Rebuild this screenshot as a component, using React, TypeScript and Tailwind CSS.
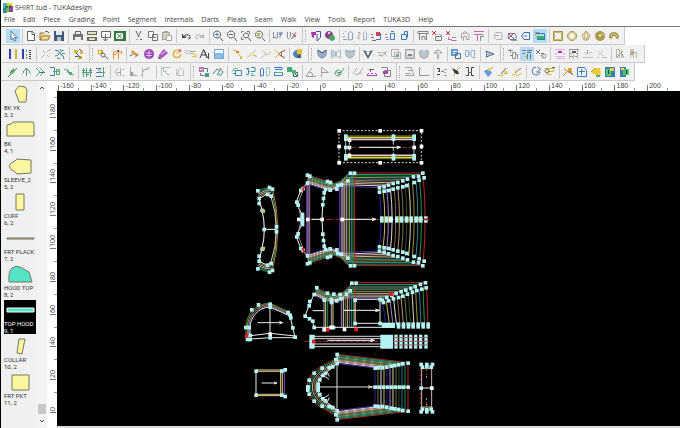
import React from 'react';

type Pt = [number, number];
// each part is "color|path" for a stroke, "color!|path" for a filled shape
type Item = { name: string; parts: string[]; active?: boolean } | number | 'grip' | 'gripNarrow';

const t = (name: string, ...parts: string[]): Item => ({ name, parts });
const on = (name: string, ...parts: string[]): Item => ({ name, parts, active: true });

const menus = ['File', 'Edit', 'Piece', 'Grading', 'Point', 'Segment', 'Internals', 'Darts', 'Pleats', 'Seam', 'Walk', 'View', 'Tools', 'Report', 'TUKA3D', 'Help'];

const fileBar: Item[] = [
  on('Select', '#fff!|M4 1v9l2-2 1.500 3 1.500-1-1.500-2.500H10z', '#5c7080|M4 1v9l2-2 1.500 3 1.500-1-1.500-2.500H10z'),
  4,
  t('New', '#fff!|M2.500 1.500h5l2 2v7h-7z', '#555|M2.500 1.500h5l2 2v7h-7zM7 1.500v3h3'),
  t('Open', '#f6dc90!|M1 3h4l1 1h4v6H1z', '#8a6a20|M1 10V3h4M1 10l2-4h8l-2 4z', '#444|M6 2q2-2 4 1'),
  t('Save', '#2f4a66!|M1 1h9l1 1v9H1z', '#dce8f0!|M3 1h6v4H3z', '#b0c0d0!|M4 7h4v4H4z'),
  5,
  t('Print', '#666!|M1 4h10v6H1z', '#eee!|M4 1h5v3H4z', '#555|M3.500 4V1.500h5V4', '#eee!|M3 7h6v3H3z'),
  t('Plot', '#555!|M1 1h10v4H1z', '#e5e0b0!|M2 2h8v2H2z', '#555!|M1 7h10v4H1z', '#e5e0b0!|M3 8h6v2H3z'),
  t('Digitize', '#fff!|M1 2h10v6H1z', '#555|M1.500 1.500h9v6h-9zM5.500 4v7M3.500 9l2 2 2-2'),
  t('Export to Excel', '#1d6b2c!|M0 1h12v10H0z', '#fff!|M2 3h7v6H2z', '#1d6b2c|M3 3.500l5 5M8 3.500l-5 5'),
  5,
  t('Cut', '#555|M3 1l3 6M8 1L5 7M3.500 9.500h1M7 9.500h2'),
  t('Copy', '#fff!|M2 1h5v7H2z', '#666|M1.500 1.500h5v6h-5zM5.500 4.500h5v6h-5zM7 7.500h2'),
  t('Paste', '#d8cdb4!|M1 2h8v8H1z', '#999|M1.500 2.500h7v7h-7zM3 1.500h4', '#fff!|M5 5h6v6H5z', '#999|M5.500 5.500h5v5h-5z'),
  5,
  t('Undo', '#333|M2.500 4v3h4M3 7q4-4 7-1q1 3-2 3', '#333!|M2 4l4 4H2z'),
  t('Redo', '#aaa|M9.500 4v3h-4M9 7Q5 3 2 6q-1 3 2 3', '#aaa!|M10 4v4H6z'),
  4,
  t('Zoom In', '#fff!|M5 1a3.500 3.500 0 1 0 .1 0', '#444|M5 1a3.500 3.500 0 1 0 .1 0M8 7.500l3 3.500', '#2a7ac0|M3 4.500h4M5 2.500v4'),
  t('Zoom Out', '#fff!|M5 1a3.500 3.500 0 1 0 .1 0', '#444|M5 1a3.500 3.500 0 1 0 .1 0M8 7.500l3 3.500M3 4.500h4'),
  t('Zoom Window', '#666|M1.500 3V1.500h2M7 1.500h2.500V4M1.500 7v2.500h2', '#444|M6 3a2.500 2.500 0 1 0 .1 0M8 7.500l3 3.500'),
  t('Zoom Piece', '#555|M5 1a3.500 3.500 0 1 0 .1 0M8 7.500l3 3.500', '#b9a840!|M3 3h3v3H3z'),
  4,
  t('What Is', '#789|M1.500 2v6l2-1 1 2M5.500 2v6M7 3q4-2 3 1l-2 2v2', '#5a90c8!|M7 3h3v2H7z'),
  t('Clear Marks', '#789|M1.500 2v6l2 1M4.500 2v5', '#b45c48|M6 8l4-6M6 3l4 4', '#46809c|M5 9l5-4'),
  'grip',
  t('Pleated Piece', '#a020a0!|M1 2h5v3H4v3L2 7z', '#2840b0|M6 1.500h4.500v6L7 11V4'),
  t('Grade Globe', '#803080!|M5 1a4 4 0 1 0 .1 0', '#38a058!|M8 5a3 3 0 1 0 .1 0', '#ddd!|M4 2h2v2H4z'),
  4,
  t('Grade Up', '#99a|M1 3.500h1M3 1.500h1M1 6.500h2M1 9.500h4', '#7898c8|M6.500 10V3q2-3 4 0v6.500z'),
  t('Grade Rotate', '#b890a0|M2 2.500q3-1 2 2q-3 1-2 4h2', '#98acd0|M7.500 10V3q2-3 3 0v6.500z'),
  t('Grade Remove', '#567|M1 4.500h2M1 7.500h3M2 10.500h4', '#c83040!|M6 2h4v4H6z', '#3060c0|M6 9.500h4.500V3'),
  t('Grade Apply', '#889|M1 4.500h2M1 7.500h3M2 9.500h3', '#2870c8|M6.500 3.500h4v6h-4zM7 1.500h3'),
  t('Grade Copy', '#2870b0|M3.500 9.500v-5h5v5zM6.500 4.500v-3h3v6'),
  5,
  t('Measure', '#777|M1 1.500h10v2H1zM2.500 10V4M9.500 4v6M5 10V6.500h3V10'),
  t('Delete Measure', '#d02020|M1 1l4 4M5 1L1 5', '#777|M4.500 6.500h6v4h-6zM8 4l3 2'),
  t('Delete Rule', '#d02020|M1 1l4 4M5 1L1 5', '#c050c0|M3.500 7v2.500h3v1h5', '#60a060|M7 7.500h4'),
  t('Stack', '#999|M2 4.500l4-3 4 3v5H7.500V6.500h-3v4M2.500 4v5', '#d090a0|M4 3.500h3'),
  t('Corner Rule', '#d050b0|M1 1.500h10M1 4.500h9M4.500 4v7', '#50a068|M7 6.500h4M7.500 6v5'),
  5,
  t('Trace', '#aaa|M4 2.500h5q1 0 1 2v5H4.500L2.500 7.500v-3zM2 5.500h5'),
  t('Trace Delete', '#4878a8|M3 3.500h6l1 2v4H4L2 7z', '#d03040|M2 3l6 6M8 3L2 9', '#60b070|M5 10.500h6'),
  t('Trace Open', '#2060b0|M4 2.500h5.500v7H4L1.500 6zM4 6h3'),
  on('Trace Fill', '#c04040|M1 2l4 2', '#347040|M1 5l4-3', '#30b060!|M3 6h8v4H3z', '#2870b0|M4 3.500h6.500v6H4.500L3 7'),
  4,
  t('Rectangle', '#9f8c32|M1.500 1.500h9v9h-9z', '#c7b450|M2.500 2.500h7v7h-7z'),
  t('Circle', '#9f8c32|M6 1.500a4.500 4.500 0 1 0 .1 0', '#c7b450|M6 2.500a3.500 3.500 0 1 0 .1 0'),
  t('Polygon', '#b29f42|M6 1l4 4-2 5H4L2 5zM6 2.500l2 2.500-1 4H5L4 5z'),
  t('Disc', '#a3903a!|M6 1a5 5 0 1 0 .1 0', '#e8dca0!|M6 4a1.500 1.500 0 1 0 .1 0', '#dacb88|M8 3l2 3'),
  t('Half Disc', '#9f8c32!|M1 8q0-6 5-6t5 6l-3 1q0-3-2-3t-2 3z', '#d8cb8a|M3 7q0-3 3-3t3 3'),
];

const pieceBar: Item[] = [
  t('Mirror Lines', '#2030a8!|M2 1h2v10H2z', '#c8b030!|M8 1h2v10H8z'),
  t('Mirror Points', '#2030a8!|M1 1h2v10H1z', '#30a050|M5.500 2v2M5.500 6v2M5.500 9v2', '#333|M8 2.500h2M8 4.500h2M8 6.500h2M8 8.500h2M8 10.500h2'),
  5,
  t('Break Line', '#aaa|M1 10l4-4M7 4l4-3M3 3l2 2M7 7l2 2'),
  t('Walk Curve', '#347090|M1 2.500h2q3 0 2 3T1 8M6 1q3 2 0 5 4 1 4 5', '#38a050|M8 2.500h2M8 5.500h3M3 10.500h3'),
  5,
  t('Seam Curve', '#d8a820!|M1 2h4v3H1zM5 8h4v3H5z', '#284880|M6 1l3 2-1 3M2 8.500h3M3 5l5 5', '#e0b030!|M7 3h3v3H7z'),
  'grip',
  t('Notch Tool', '#d8a018!|M1 2h5v4H1z', '#555|M6 5a2 2 0 1 0 .1 0M8 8l3 3', '#fff!|M2 3h2v2H2z'),
  t('Path Tool', '#e88820|M2.500 11V4q3-2 3 2l-3 1M7.500 11V3.500h3V6', '#b02020!|M6 2h2v2H6z'),
  4,
  t('Draft', '#d89018!|M3 2l7 5-3 1-5-4z', '#555|M1 8l3-2', '#2870c0|M6 9.500l3-3'),
  t('Button', '#9030b0!|M6 1a5 5 0 1 0 .1 0', '#e0b8ec|M6 2v8M2.500 5h7M3 7.500h6'),
  t('Pencil', '#a040c0!|M7 1l4 4-6 5-4 1 1-4z', '#ddd|M4 7l5-4', '#666|M1 10l3 1'),
  t('Rotate', '#e0a818|M6 2a4 4 0 1 0 4 4M6 2.500a3.500 3.500 0 1 0 3.500 3.500', '#e05030!|M7 1l4 1-3 3z', '#e0a818|M5 6l4-3'),
  t('Copy Object', '#bbb|M1.500 2.500h4v3h-4zM5 5.500h4', '#d8c030|M7 8.500h4M8 6.500h3v3', '#90a060|M6 3.500h4'),
  t('Text', '#333|M1 10L4.500 1.500 8 10M2.500 7h4M9.500 5v6', '#333|M5 2l3.500 8'),
  t('Picture', '#84bce8!|M1 1h10v10H1z', '#fff!|M1 2h10v3H1z', '#6aa0d0|M1.500 1.500h9v9h-9zM2 8l3-3 5 5'),
  5,
  t('Dart Add', '#d8b020|M1 2.500h4M4 3l5 6', '#e07820!|M4 3h3v2H4z', '#d8c030!|M8 8h2v3H8z'),
  t('Dart Line', '#bbb|M1 10l9-8', '#cac048|M2 9l4-4M7 7.500h3v2'),
  t('Dart Fold', '#bbb|M2 2l5 5 4-3M1 10l5-4', '#c8b830|M4 4l3 3'),
  t('Dart Close', '#d03020|M4 6l7-4M4 6l7 4', '#d8b020|M1 2l4 4-4 4', '#508050|M7.500 3v6'),
  4,
  t('Render', '#4078c0!|M5 2a4 4 0 1 0 .1 0', '#e8b820!|M5 1h5v5H5z', '#285848!|M5 7h4v3H5z'),
  'grip',
  t('Vest', '#93a9c8!|M1 2h2l3 2 3-2h2l-1 6-4 3-4-3z', '#345|M2 2l4 3 4-3', '#7088a0|M1.500 2l1 6 3.500 2 3.500-2 1-6'),
  t('Vest Split', '#9eb2c6|M1.500 2v8l4-2V4zM10.500 2v8l-4-2V4z', '#bcccda!|M2 4h3v4H2z'),
  t('Vest Shade', '#b8c4cc!|M1 2h10l-1 6-4 3-4-3z', '#92a5b3|M1.500 2l1 6L6 10l3.500-2 1-6-3 2h-3z'),
  4,
  t('Dart Down', '#345066!|M1 2l5 2 5-2-5 9z', '#e8f0f4!|M4 4h4l-2 4z'),
  t('Dart Split', '#aaa|M1 4.500h3l2 4 5-6M6 4.500h3.500v3M2 7.500h3'),
  t('Piece Grid', '#aaa|M1.500 1.500h7v7h-7zM4.500 4.500h6v6h-6z', '#79909c!|M6 6h3v3H6z'),
  t('Piece Image', '#ccc!|M1 1h10v10H1z', '#999|M1.500 1.500h9v9h-9z', '#eef!|M3 3h6v3H3z', '#777!|M4 6h4v2H4z'),
  t('Piece Shade', '#b8c2cc!|M1 3l3-2 2 2 3-2 2 2-1 6-4 2-4-2z', '#92a5b3|M1.500 3l1 6L6 10.500 9.500 9l1-6'),
  t('Piece Drop', '#a5a9ad!|M1 5l5-4 5 4-4 1v5H5V6z', '#d8dfe5!|M5 3h3v3H5z'),
  4,
  t('Layer', '#5890c8!|M1 1h7v7H1z', '#fff|M3 3.500h4M3 5.500h4', '#36608c|M5.500 5.500h5v5h-5z'),
  t('Layer Pair', '#88a8c4|M1.500 2.500h3v6h-3zM7.500 2.500h3v8l-3-2z', '#b8cce0!|M5 3h3v5H5z'),
  6,
  t('Play', '#3a5878|M2 3l8 3-8 3 1-3z', '#98b0c8!|M3 5h4v2H3z'),
  'gripNarrow',
  t('Plan A', '#888|M1 2.500h5M3.500 1v4M5.500 4.500h3v6h-3zM8 6.500h2.500V11', '#5a9468|M3 7.500h3'),
  on('Plan B', '#a06090|M1 2.500h4M1 5.500h3', '#447060|M6 2.500h5M6 4.500h4M6.500 6v5M9.500 6v5', '#c89030|M4 8.500h3'),
  t('Plan C', '#666|M1 2l4 4M1 6l4-4M6 5.500h3M6 7l3 3', '#888|M9 6a2 2 0 1 0 .1 0'),
  5,
  t('Mark A', '#e8a8e4|M1 1.500h10M1 8.500h10M2 10.500h9', '#b02090!|M4 3h4v2H4z', '#df9bdc|M1 5.500h2M9 5.500h2'),
  t('Mark B', '#888|M1 1.500h10M2 5.500h2M8 5.500h2M2 8.500h3M7 8.500h3', '#445!|M4 3h4v2H4z', '#aaa|M1.500 2v9M5.500 6v5M9.500 2v9'),
  t('Mark C', '#bbb|M2 4l3 3M7 4.500h3M1 9.500h10', '#999|M5.500 2v4'),
  t('Mark D', '#bbb|M2 3l5 5M7 3L3 7M6 9.500h5M1 9.500h2'),
  4,
  t('Block A', '#b5ae98|M2.500 1.500h3v8h-3zM7.500 2v8', '#87938b|M3 9l6-6M8 6l2 4'),
  t('Block B', '#b5ae98|M2.500 10V1.500h3V10M5.500 4.500h3V10', '#979d90!|M3 3h2v4H3z'),
];

const gradeBar: Item[] = [
  t('Add Point', '#555|M1 11L10 2', '#49b960!|M4 4l4-1v3L5 8H3z', '#247038|M3 7l4-4'),
  t('Move Point', '#3a9850|M5.500 10V2M2 6l3.500-4L9 6', '#74889a|M1 8l2-2M8 6l2 2'),
  t('Align Point', '#48a868|M1 2l4 4-4 4M5 2l4 4-4 4', '#336677|M4 6.500h6'),
  t('Merge Point', '#3570a0|M1 1.500h4.500v8H1', '#40a060|M4 5.500h7M7.500 3.500v5h3v-5z'),
  t('Slide Point', '#48a868|M1 3l3 1 3 3 4 2', '#2d7080|M5 3.500v3h4', '#48a868!|M6 6h3v3H6z'),
  4,
  t('Spread', '#3c9c58|M2.500 2v9M5.500 2v9M9.500 2v9M1 6.500h10', '#3d7898|M1 4.500h3M5 8.500h3M8 4.500h3'),
  t('Collapse', '#3870a8|M1 2.500h5l-2 2 2 2H1M1 10.500h6', '#42a45c|M8.500 1v10M6 6.500h4'),
  4,
  t('Shift Left', '#aaa|M5 2L2 6l3 4M7.500 2v8M9 3.500h2M9 9.500h2', '#76b48a|M4 6.500h4'),
  t('Angle', '#aaa|M3.500 1v8.500h7M4 6l4 3', '#999!|M3 6h3v4H3z'),
  t('Curve Corner', '#aaa|M1 10Q1 2 9 1.500M1.500 11V2', '#a3c4ab|M4 3.500h4'),
  5,
  t('Bounds', '#bbb|M1.500 10V1.500h9M4 5l5 4', '#96c8a5|M3.500 2v3.500h3M7 8.500h3'),
  t('Round Notch', '#bbb|M2.500 3v6.500h7V5Q6-1 4.500 4v5', '#93c2a1|M2 7.500h3'),
  'grip',
  t('Mapping', '#bd60b0!|M1 1h5v5H1z', '#fff|M2 3.500h3', '#367a5a|M6 2.500h3.500V6M2.500 7v2.500h4', '#448888!|M7 7h4v4H7z'),
  t('Link', '#367a98|M1 8l4-5 3 2-3 4M6 9h3l2-3-3-3', '#bfa434|M7 2.500h3'),
  5,
  t('Rotate Grade', '#2880b0|M4.500 4.500h6v5h-6zM2 7.500h2', '#40b060|M1 5l3-3 3 1M2 3l2 2'),
  t('Flip Grade', '#2880b0|M1 2.500h2.500v6H1M6 1.500h4v4H6', '#48a888|M8 7l-2 2.500h4M2 3l3 3'),
  t('Mirror Grade', '#2870c8|M1.500 10V3q2-2 3 0v6.500z', '#90c8a8|M7.500 10V1.500h3v8z'),
  t('Equal Grade', '#2870c8|M1 1.500h8v2H2M1.500 9.500v-3h8v3z', '#45a579|M3 6.500h6'),
  t('Nest', '#30a868!|M0 1h5v5H0z', '#335566|M4 3l6 7M6.500 6.500h4v4h-4z', '#3cb371!|M5 4h4v4H5z'),
  4,
  t('Protractor', '#999|M1 10L7 2M1 10.500h10M4 6q4 0 4 4'),
  t('Triangle', '#999|M2.500 11V1.500l7 5H3'),
  t('Compass', '#48a058|M5 4a3 3 0 1 0 .1 0M3 5l3 4 5-7', '#3878a0|M5 6.500h3'),
  5,
  t('Parallel', '#aaa|M1 8l4-6M6 9l5-7M3 9l7-2'),
  t('Seam Width', '#555|M3 3.500h5M4.500 3v3', '#b030a8|M1 9.500h10M1 9l2-2M11 9L9 7M5 7.500h2'),
  t('Seam Copy', '#777|M1.500 1.500h6v3M4.500 4.500h6v6h-6z', '#b030a8!|M3 5h5v3H3z'),
  'grip',
  t('Seam Shape', '#999|M1 1.500h6l3 8H1M4 4.500h4M1 7.500h6'),
  t('Seam Corner', '#888|M1.500 1v8.500h10', '#bbb|M1 2.500h2M9.500 8v2'),
  4,
  t('Fold Left', '#222|M1 2.500h2.500v3H2M1 8.500h3', '#cc5848|M5 5.500h3', '#999|M8 3.500h3M8 6.500h2M8 9.500h3'),
  t('Fold Curve', '#222!|M2 2l6 3 1 3H5z', '#d89830|M7 4l3-3M3 10l3-3'),
  t('Fold Mirror', '#333|M2 1.500h2.500v8H2M10 1.500H7.500v8H10', '#555|M4 6.500h4'),
  5,
  t('Brush', '#5090d8!|M1 5l5-2 3 4-4 4z', '#d89020|M6 4l4-3', '#e8c460!|M5 2h3v3H5z'),
  t('Highlight', '#e0a818|M1 9.500h4l2-2h4', '#555|M4 8l5-6', '#f2cf45!|M7 5h3v2H7z'),
  t('Underline', '#e0b028|M1 9l3-1 2 2 5-3', '#776677|M4 7l6-5', '#e5c45a|M4 4.500h4'),
  5,
  t('Loop Back', '#3070b0|M6 1a4 4 0 1 0 4 5H6', '#6a7a88|M7 1l4 2-3 2'),
  t('Loop Gold', '#d8b030|M1 2.500h9v3H3.500v3h4', '#665a30|M3 3a2 2 0 1 0 .1 0M8 1.500h3'),
  4,
  t('Wand', '#d07818|M1 10l6-6M2 3l8 5', '#d8a020!|M6 2h4v5H6z', '#406890|M7 5l4 4'),
  t('Piece Sync', '#2870c8|M1.500 1.500h7l2 3v6h-9zM3 5.500h6M5.500 3v6'),
  t('Highlight Piece', '#e8c820!|M5 2h5l1 7H5L1 6z', '#b09020|M1 6l4-4', '#36a0a8!|M6 9h4v2H6z'),
  t('Stack Blue', '#2870b0!|M1 1h10v10H1z', '#48c858!|M2 3h5v7H2z', '#e4c830!|M6 2h4v3H6z', '#112244|M4.500 4v4'),
  t('Stack Green', '#2870b0!|M2 1h6v10H2z', '#40c060!|M5 3h6v6H5z', '#ffd840!|M3 2h3v2H3z', '#112244|M8.500 4v4'),
];

const drawIcon = (parts: string[]) => (
  <svg viewBox="0 0 12 12" className="h-3 w-3 opacity-90" fill="none" aria-hidden="true">
    {parts.map((part, i) => {
      const [color, d] = part.split('|');
      return color.endsWith('!') ? (
        <path key={i} d={d} fill={color.slice(0, -1)} />
      ) : (
        <path key={i} d={d} stroke={color} />
      );
    })}
  </svg>
);

const gapWidths: Record<number, string> = { 4: 'w-[4px]', 5: 'w-[5px]', 6: 'w-[6px]' };

const Toolbar: React.FC<{ label: string; items: Item[] }> = ({ label, items }) => (
  <div className="flex h-[18px] bg-white">
    <div role="toolbar" aria-label={label} className="flex items-center border-b border-r border-[#c9c9c9] bg-[#f1f1f1] pl-[5px] pr-[3px]">
      {items.map((item, i) => {
        if (typeof item === 'number') {
          return (
            <span key={i} className={`${gapWidths[item]} flex h-[14px] shrink-0 justify-center`}>
              <span className="w-px bg-[#c8c8c8]" />
            </span>
          );
        }
        if (item === 'grip' || item === 'gripNarrow') {
          return (
            <span key={i} className={`${item === 'grip' ? 'w-[10px]' : 'w-[9px]'} flex h-[17px] shrink-0 items-center gap-[2px] pl-[3px]`}>
              <span className="h-full w-px bg-[#c8c8c8]" />
              <span className="h-3 border-l border-dotted border-[#aaa]" />
            </span>
          );
        }
        return (
          <button
            key={i}
            type="button"
            aria-label={item.name}
            className={`flex h-[14px] w-[14px] shrink-0 items-center justify-center ${item.active ? 'bg-[#b5dcf5]' : ''}`}
          >
            {drawIcon(item.parts)}
          </button>
        );
      })}
    </div>
  </div>
);

const pieces = [
  { name: 'BK YK', count: '3, 2', d: 'M11 7l4-5 6 1 2 3-1 12h-7z', fill: '#fbf7a0' },
  { name: 'BK', count: '4, 1', d: 'M3 5l4-1 2-2h20l1 3v11H3z', fill: '#fbf7a0' },
  { name: 'SLEEVE_2', count: '5, 2', d: 'M5 10q2-4 6-5l2-2 14 1v13l-14 1-2-2q-5-2-6-6z', fill: '#fbf7a0' },
  { name: 'CUFF', count: '6, 2', d: 'M12 2h8v16h-8z', fill: '#fbf7a0' },
  { name: 'FRT PLACK', count: '7, 2', d: 'M3 10h27v1H3z', fill: '#aaa98c' },
  { name: 'HOOD TOP', count: '8, 2', d: 'M5 18q-1-10 3-14 4-3 8-1l9 5 3 10z', fill: '#55e3c6' },
  { name: 'TOP HOOD', count: '9, 1', d: 'M3 8h27v4H3z', fill: '#55e3c6', selected: true },
  { name: 'COLLAR', count: '10, 2', d: 'M15 3h6l-3 15-5-1z', fill: '#fbf7a0' },
  { name: 'FRT PKT', count: '11, 2', d: 'M8 3h17v15H8z', fill: '#fbf7a0' },
];

const PieceList = () => (
  <aside aria-label="Pieces" className="flex w-[46px] shrink-0 bg-[#f0f0f0]">
    <div className="flex w-[34px] flex-col gap-[2px] pl-[3px] pt-[3px] font-['Roboto',sans-serif]">
      {pieces.map(p => (
        <button
          key={p.name}
          type="button"
          className={`flex h-[34px] w-[32px] shrink-0 flex-col whitespace-nowrap text-left text-[6px] leading-[7px] ${p.selected ? 'bg-black text-white' : 'text-[#333]'}`}
        >
          <svg viewBox="0 0 32 20" className="h-5 w-8 shrink-0" aria-hidden="true">
            <path d={p.d} fill={p.fill} stroke={p.selected ? '#fff' : '#77775f'} />
          </svg>
          <span>{p.name}</span>
          <span>{p.count}</span>
        </button>
      ))}
    </div>
    <div className="ml-[2px] flex w-[10px] flex-col items-center justify-between bg-[#f3f3f3] py-1">
      <svg viewBox="0 0 6 6" className="h-[6px] w-[6px]" aria-hidden="true"><path d="M1 4l2-2 2 2" fill="none" stroke="#444" /></svg>
      <div className="flex flex-col items-center gap-1">
        <div className="h-[10px] w-2 bg-[#c8c8c8]" />
        <svg viewBox="0 0 6 6" className="h-[6px] w-[6px]" aria-hidden="true"><path d="M1 2l2 2 2-2" fill="none" stroke="#444" /></svg>
      </div>
    </div>
  </aside>
);

const topMarks = Array.from({ length: 19 }, (_, i) => -160 + i * 20);
const sideMarks = Array.from({ length: 10 }, (_, i) => 180 - i * 20);

const TopRuler = () => (
  <div className="flex h-[10px] bg-white pl-px">
    {topMarks.map(m => (
      <div key={m} className="flex min-w-0 flex-1 justify-between text-[7px] leading-[10px] text-[#444]">
        <span className="flex">
          <span className="mr-px mt-1 h-[6px] w-px bg-[#777]" />
          {m}
        </span>
        <span className="mr-3 mt-[7px] h-[3px] w-px bg-[#999]" />
      </div>
    ))}
  </div>
);

const SideRuler = () => (
  <div className="w-[10px] shrink-0 bg-white pt-1">
    <div className="flex h-[328px] flex-col">
      {sideMarks.map(m => (
        <div key={m} className="flex min-h-0 flex-1 flex-col items-end justify-between pt-3">
          <span className="h-px w-[3px] shrink-0 bg-[#999]" />
          <span className="flex flex-col items-center gap-px">
            <span className="rotate-180 text-[7px] leading-[8px] text-[#444] [writing-mode:vertical-rl]">{m}</span>
            <span className="h-px w-[6px] bg-[#777]" />
          </span>
        </div>
      ))}
    </div>
  </div>
);

// size colours, largest to smallest
const sizes = ['#b82634', '#23a03f', '#2b87a0', '#9c9943', '#3f9080', '#8c7a55', '#c9bf8e', '#d0a3a8', '#e6d8da', '#4d3aa8'];
const hemColors = ['#25259b', '#c4b74c', '#a578c9', '#ddd', '#85644c', '#b39a76', '#77763e', '#324a27', '#e0d7aa', '#99903a', '#347b9e', '#28933e', '#b82634'];

const toPath = (pts: Pt[]) => 'M' + pts.map(p => p.join(' ')).join('L');
const flip = (pts: Pt[], axis: number): Pt[] => pts.map(([x, y]) => [x, 2 * axis - y]);

// graded sizes spread between the outer and the inner outline
const Nest: React.FC<{ outer: Pt[]; inner: Pt[]; colors?: string[] }> = ({ outer, inner, colors = sizes }) => (
  <>
    {colors.map((c, i) => {
      const k = i / (colors.length - 1);
      const pts = outer.map(([x, y], n): Pt => [x + (inner[n][0] - x) * k, y + (inner[n][1] - y) * k]);
      return <path key={i} d={toPath(pts)} stroke={c} />;
    })}
  </>
);

const Dots: React.FC<{ pts: Pt[]; color?: string }> = ({ pts, color = '#b5f3f2' }) => (
  <>
    {pts.map(([x, y], i) => (
      <rect key={i} x={x - 5} y={y - 5} width="11" height="11" fill={color} stroke="none" />
    ))}
  </>
);

const bodyOuter: Pt[] = [[203, 165], [262, 184], [283, 190], [302, 183], [327, 159], [548, 159]];
const bodyInner: Pt[] = [[203, 192], [256, 209], [275, 212], [290, 205], [303, 198], [418, 203]];
const bodyDots: Pt[] = [[202, 165], [209, 168], [202, 189], [189, 205], [182, 211], [170, 246], [174, 255], [187, 283], [187, 293], [262, 184], [271, 187], [256, 208], [252, 218], [250, 235], [248, 254], [270, 210], [290, 207], [293, 196], [303, 194], [323, 182], [331, 159], [343, 159]];
const hemTop: Pt[] = [[418, 203], [432, 200], [445, 195], [459, 190], [473, 187], [488, 182], [502, 177], [520, 170], [535, 168], [548, 159]];
const hemLow: Pt[] = [[418, 216], [432, 213], [445, 211], [459, 207], [473, 203], [488, 200], [500, 196], [522, 187], [537, 180], [552, 173]];
const collarDots: Pt[] = [[53, 212], [88, 202], [97, 207], [57, 235], [82, 223], [93, 228], [57, 250], [66, 271]];
const frontDots: Pt[] = [[230, 53], [222, 73], [209, 94], [207, 107], [195, 138], [208, 146], [218, 153], [222, 172], [262, 69], [252, 90], [281, 72], [274, 88], [274, 97], [290, 92], [300, 73], [302, 86], [319, 72], [330, 62], [335, 39], [348, 39], [272, 172], [280, 172], [345, 90], [345, 160], [420, 88], [420, 160]];
const frontTop: Pt[] = [[427, 90], [440, 82], [455, 76], [468, 70], [483, 65], [497, 60], [512, 55], [525, 50], [541, 43], [556, 38]];
const frontLow: Pt[] = [[430, 97], [445, 92], [460, 86], [475, 82], [488, 78], [502, 72], [517, 66], [530, 61], [545, 57], [558, 53]];
const hoodDots: Pt[] = [[17, 172], [27, 172], [22, 208], [30, 208], [30, 196], [35, 119], [55, 104], [90, 102], [90, 111], [144, 127], [150, 135], [152, 143], [158, 173], [165, 201], [90, 203]];
const sleeveDots: Pt[] = [[291, 253], [287, 268], [291, 280], [278, 290], [267, 293], [246, 294], [256, 310], [248, 316], [222, 309], [239, 329], [207, 330], [234, 342], [203, 350]];
const sleeveHem: Pt[] = [[405, 294], [415, 293], [427, 293], [440, 291], [453, 288], [464, 286], [476, 284], [488, 281], [504, 279]];

const hemX = (i: number) => 421 + i * 11;

const UpperPieces = () => (
  <g transform="translate(240 120) scale(.3333)" fill="none" strokeWidth="3">
    <rect x="297" y="32" width="247" height="96" stroke="#ddd" strokeDasharray="6 5" />
    <path d="M317 48H522M317 116H522" stroke="#7f9b2d" />
    <path d="M317 52H522M317 112H522" stroke="#ded83c" strokeWidth="4" />
    <path d="M317 58H522M317 106H522" stroke="#ecc8cd" strokeWidth="5" />
    <path d="M317 50V114M522 50V114" stroke="#bbb" />
    <path d="M328 62V105M460 62V105" stroke="#ddd" strokeDasharray="12 6" />
    <path d="M317 82H530" stroke="#8b3038" strokeDasharray="12 7" />
    <path d="M358 82H480M470 78l12 4-12 4" stroke="#fff" />
    <Dots pts={[[317, 48], [317, 57], [317, 82], [317, 107], [317, 116], [460, 48], [460, 57], [460, 107], [460, 116], [522, 48], [522, 57], [522, 107], [522, 116]]} />
    <Dots color="#fff" pts={[[297, 32], [420, 32], [544, 32], [297, 79], [544, 79], [297, 128], [420, 128], [544, 128], [328, 60], [328, 82], [328, 106], [522, 82]]} />

    <Nest colors={['#23963f', '#2b7f96', '#c9bf8e', '#d0a3a8', '#95923f', '#fff']} outer={[[53, 212], [72, 206], [92, 202]]} inner={[[57, 237], [80, 222], [93, 228]]} />
    <Nest colors={['#23963f', '#2b7f96', '#c9bf8e', '#d0a3a8', '#95923f', '#fff']} outer={[[53, 446], [72, 452], [92, 457]]} inner={[[57, 423], [80, 435], [93, 428]]} />
    <path d="M97 204Q130 328 97 452" stroke="#a87832" />
    <path d="M94 206Q126 328 94 451" stroke="#45954f" />
    <path d="M92 226Q126 328 92 430" stroke="#eac6b4" />
    <path d="M57 235L66 271Q80 328 66 385L57 426M72 328H109" stroke="#fff" />
    <Dots pts={[...collarDots, ...flip(collarDots, 329), [72, 328], [109, 320], [109, 335]]} />
    <Dots color="#b3c57a" pts={[[69, 273], [69, 385]]} />

    <Nest outer={bodyOuter} inner={bodyInner} />
    <Nest outer={flip(bodyOuter, 298)} inner={flip(bodyInner, 298)} />
    {['#5936a7', '#b780c7', '#ddd', '#b3a078', '#d0a3a8', '#4b7f61', '#8a9c4a', '#2b7f96', '#23963f', '#b82634'].map((c, i) => (
      <path key={i} d={`M${299 + i * 5} ${196 - i * 4}V${400 + i * 4}`} stroke={c} />
    ))}
    <path d="M200 190V406" stroke="#6a3dbb" />
    <path d="M204 188V408" stroke="#cba6da" />
    <path d="M209 188V408" stroke="#a77a98" />
    {hemColors.map((c, i) => {
      const rise = i * 3;
      return <path key={i} d={`M${hemX(i) - 3} ${212 - rise}Q${hemX(i) + 8} 298 ${hemX(i) - 3} ${384 + rise}`} stroke={c} />;
    })}
    <path d="M202 189L183 209L168 248L187 285V311L168 348L183 387L202 407" stroke="#eee" />
    <path d="M210 168L190 208L174 252L181 285V311L174 344L190 388L210 428" stroke="#998d9a" />
    <path d="M256 208Q236 298 256 388" stroke="#eee" />
    <path d="M175 298H568" stroke="#a52a34" strokeDasharray="20 8" />
    <path d="M215 298H248M306 298H405M396 294l12 4-12 4" stroke="#fff" />
    <Dots pts={[...bodyDots, ...flip(bodyDots, 298), ...hemTop, ...hemLow, ...flip(hemTop, 298), ...flip(hemLow, 298)]} />
    <path d="M194 198l-7 14M194 398l-7-14" stroke="#e02020" strokeWidth="6" />
    <Dots color="#fff" pts={[[176, 298], [203, 298], [246, 298], [306, 298]]} />
    <Dots pts={[425, 439, 452, 470, 484, 499, 513, 528, 542, 557].map((x): Pt => [x, 294])} />
    <Dots pts={[425, 439, 452, 470, 484, 499, 513, 528, 542, 557].map((x): Pt => [x, 302])} />
    <path d="M432 291v14M446 291v14M478 291v14M507 291v14M536 291v14" stroke="#b6bb3f" strokeWidth="4" />
    <Dots color="#fff" pts={[[452, 298]]} />
    <path d="M552 298h14" stroke="#c81e1e" strokeWidth="6" />
  </g>
);

const LowerPieces = () => (
  <g transform="translate(240 270) scale(.3333)" fill="none" strokeWidth="3">
    <Nest outer={[[230, 55], [262, 68], [283, 75], [308, 68], [338, 38], [556, 38]]} inner={[[222, 76], [252, 91], [275, 98], [300, 92], [320, 86], [427, 86]]} />
    {hemColors.map((c, i) => (
      <path key={i} d={`M${428 + i * 11} ${98 - i * 4}L${438 + i * 10.500} 165`} stroke={c} />
    ))}
    <path d="M252 88V178M274 90V172" stroke="#b9a7c9" />
    <path d="M257 85V178M279 90V172" stroke="#dad579" />
    <path d="M263 70V178" stroke="#2b9640" />
    {['#b780c7', '#ddd', '#77763e', '#c9bf8e', '#85644c', '#2b7f96', '#23963f', '#b82634'].map((c, i) => (
      <path key={i} d={`M${304 + i * 6} ${88 - i * 6}V172`} stroke={c} />
    ))}
    <path d="M222 73L207 107L195 138L218 153L222 172H430M345 88H420V160H345z" stroke="#eee" />
    <path d="M218 122H252M312 121H416M406 117l12 4-12 4" stroke="#fff" />
    <Dots pts={[...frontDots, ...frontTop, ...frontLow]} />
    <path d="M425 158h40v16h-40z" fill="#b5f3f2" stroke="none" />
    <Dots pts={[475, 490, 505, 519, 534, 549, 564].flatMap((x): Pt[] => [[x, 162], [x, 170]])} />
    <Dots color="#e02020" pts={[[262, 179], [348, 178], [453, 72]]} />
    <Dots color="#fff" pts={[[252, 179], [313, 178], [275, 172]]} />

    <path d="M215 199H425M215 206H425M215 222H425M215 230H425" stroke="#ddd" />
    <path d="M193 214H576" stroke="#a52a34" strokeDasharray="14 5" />
    <path d="M262 211H400M392 207l12 4-12 4" stroke="#fff" />
    <path d="M208 194h16v42h-16zM421 194h38v42h-38z" fill="#b5f3f2" stroke="none" />
    {[467, 482, 497, 511, 526, 541, 557].map(x => (
      <path key={x} d={`M${x - 4} 194h10v42h-10z`} fill="#b5f3f2" stroke="none" />
    ))}
    <path d="M460 203H562M460 214H562M460 225H562" stroke="#a05560" />
    <Dots color="#e02020" pts={[[221, 214]]} />

    <path d="M18 205V172C18 135 45 100 90 100L148 126" stroke="#2b9640" />
    <path d="M22 205V172C22 138 48 103 90 103L148 130" stroke="#c9793d" />
    <path d="M26 203V172C26 141 52 107 90 107L148 134" stroke="#9c8bd0" />
    <path d="M30 200V172C30 144 55 111 90 111L150 138L158 173L165 201" stroke="#eee" />
    <path d="M25 198L90 190L165 198M22 208L90 203H165M90 102V203M52 158H126M118 154l10 4-10 4" stroke="#eee" />
    <Dots pts={hoodDots} />
    <Dots color="#fff" pts={[[90, 192]]} />
    <Dots color="#e02020" pts={[[19, 197]]} />

    <path d="M48 302V376M65 339H108M102 336l9 3-9 3" stroke="#eee" />
    <path d="M48 300H135M48 377H135M122 302V375" stroke="#dfdb62" />
    <path d="M48 304H130M48 373H130M127 302V375" stroke="#e9bfb1" />
    <path d="M133 300V378" stroke="#8050a8" />
    <Dots pts={[[48, 303], [125, 303], [135, 299], [48, 375], [125, 375], [135, 379]]} />

    <Nest outer={[[291, 253], [505, 278]]} inner={[[291, 280], [405, 294]]} />
    <Nest outer={[[291, 449], [505, 424]]} inner={[[291, 422], [405, 408]]} />
    {['#25259b', '#85644c', '#ddd', '#c4b74c', '#25259b', '#a578c9', '#e0d7aa', '#77763e', '#324a27', '#347b9e', '#28933e', '#b82634'].map((c, i) => (
      <path key={i} d={`M${405 + i * 9} ${293 - i}V${409 + i}`} stroke={c} />
    ))}
    {['#b82634', '#23963f', '#3f8577', '#c9bf8e', '#8c7a55', '#d0a3a8', '#ddd'].map((c, i) => (
      <path key={i} d={`M288 ${266 + i * 3}C${248 + i * 3} ${287 + i * 3} ${202 + i * 5} ${305 + i * 2} ${202 + i * 5} 351S${248 + i * 3} ${415 - i * 3} 288 ${436 - i * 3}`} stroke={c} />
    ))}
    <path d="M291 253V449M235 351H505M384 347l12 4-12 4M248 316l20 12M248 386l20-12M262 305l6 15M262 397l6-15" stroke="#ddd" />
    <Dots pts={[...sleeveDots, ...flip(sleeveDots, 351), ...sleeveHem, ...flip(sleeveHem, 351), [234, 351], [203, 360]]} />
    <Dots pts={[405, 417, 430, 442, 454, 466, 478, 490, 504].map((x): Pt => [x, 351])} />

    <path d="M545 285V420M575 285V420" stroke="#cbb2b6" />
    <path d="M541 283V424M560 283V315M560 395V424" stroke="#a82634" strokeDasharray="7 7" />
    <path d="M541 354H577M560 319v4M560 385v4M560 402v4" stroke="#eee" />
    <path d="M545 296H575M545 411H575" stroke="#c4bb62" />
    <Dots pts={[[543, 283], [560, 283], [577, 283], [547, 291], [560, 289], [573, 291], [543, 354], [547, 417], [560, 419], [573, 417], [543, 425], [560, 425], [577, 425]]} />
    <Dots color="#fff" pts={[[575, 354]]} />
  </g>
);

const App: React.FC = () => (
  <div className="flex min-h-screen flex-col overflow-hidden border-l border-black bg-[#f0f0f0] font-['Open_Sans',sans-serif] text-[#444]">
    <header className="bg-white">
      <div className="flex h-[14px] items-center gap-[2px] pl-[2px] pt-px">
        <svg viewBox="0 0 10 10" className="h-[10px] w-[10px]" aria-hidden="true">
          <path d="M0 0h4v5H0z" fill="#46b9b1" />
          <path d="M4 0h5v5H4z" fill="#d8dd35" />
          <path d="M0 5h4v5H0z" fill="#3c83a3" />
          <path d="M5 3h5v6H5z" fill="#91429b" />
          <path d="M3 2l3 1v6H3z" fill="#55c34e" />
          <path d="M2 4h3M7 2v3" stroke="#523" />
        </svg>
        <h1 className="text-[7px] leading-[10px]">SHIRT.tud - TUKAdesign</h1>
      </div>
      <nav aria-label="Main menu" className="flex h-[13px] items-center gap-2 whitespace-nowrap border-b border-[#777] pl-[3px] text-[7px] leading-[10px]">
        {menus.map(m => (
          <button key={m} type="button">{m}</button>
        ))}
      </nav>
    </header>
    <Toolbar label="File and view" items={fileBar} />
    <Toolbar label="Piece" items={pieceBar} />
    <Toolbar label="Grading" items={gradeBar} />
    <main className="flex flex-1">
      <PieceList />
      <SideRuler />
      <div className="flex min-w-0 flex-1 flex-col font-['Liberation_Sans',sans-serif]">
        <TopRuler />
        <div className="flex-1 bg-black">
          <svg viewBox="57 91 623 335" className="block w-full" role="img" aria-label="Shirt pattern pieces">
            <UpperPieces />
            <LowerPieces />
          </svg>
        </div>
        <div className="h-[2px] bg-[#ddd]" />
      </div>
    </main>
  </div>
);

export default App;
